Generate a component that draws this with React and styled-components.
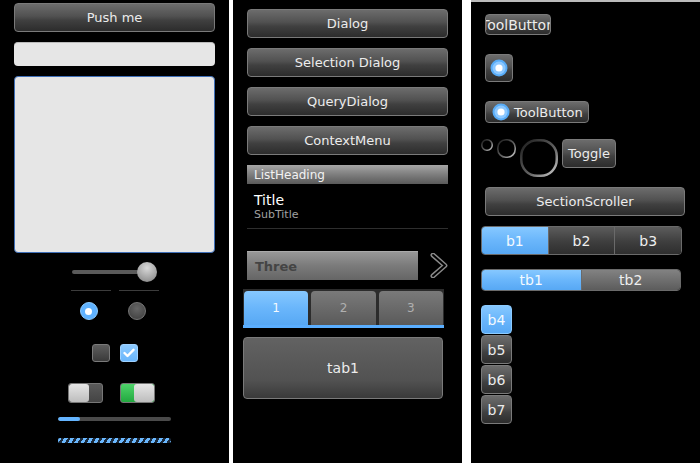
import React from "react";
import styled, { createGlobalStyle, css } from "styled-components";

const Global = createGlobalStyle`
  html, body {
    margin: 0;
    padding: 0;
    background: #fff;
  }
  body {
    font-family: "DejaVu Sans", "Liberation Sans", sans-serif;
  }
`;

const Page = styled.div`
  display: flex;
  width: 700px;
  height: 463px;
  background: #fff;
  overflow: hidden;
`;

const Panel = styled.div`
  width: 229px;
  height: 463px;
  margin-left: ${(p) => p.$gap || 0}px;
  background: #000;
  display: flex;
  flex-direction: column;
  align-items: ${(p) => (p.$start ? "flex-start" : "stretch")};
  padding: 0 14px;
  box-sizing: border-box;
  overflow: hidden;
  ${(p) => p.$top && css`border-top: 2px solid #bbb;`}
`;

const darkGrad = css`
  background: linear-gradient(#6c6c6c 0%, #515151 45%, #404040 60%, #2c2c2c 100%);
  border: 1px solid #7a7a7a;
  color: #ececec;
`;

const blueGrad = css`
  background: linear-gradient(#86c8ff 0%, #6ab6fb 50%, #57a8f4 100%);
  color: #f4faff;
`;

const Button = styled.div`
  ${darkGrad};
  box-sizing: border-box;
  height: ${(p) => p.$h || 29}px;
  width: ${(p) => (p.$w ? `${p.$w}px` : "auto")};
  margin-top: ${(p) => p.$mt || 0}px;
  border-radius: 4px;
  display: flex;
  align-items: center;
  justify-content: center;
  font-size: 13px;
  white-space: nowrap;
  overflow: hidden;
  flex-shrink: 0;
  & > svg {
    flex-shrink: 0;
  }
`;

const TextField = styled.div`
  height: 24px;
  margin-top: 10px;
  background: #e6e6e6;
  border-radius: 4px;
  border-top: 1px solid #bbb;
  box-sizing: border-box;
`;

const TextArea = styled.div`
  height: 177px;
  margin-top: 10px;
  background: #e6e6e6;
  border: 1px solid #3f6fb8;
  border-radius: 4px;
  box-sizing: border-box;
`;

const Row = styled.div`
  display: flex;
  justify-content: ${(p) => p.$justify || "center"};
  align-items: center;
  gap: ${(p) => p.$gap || 0}px;
  margin-top: ${(p) => p.$mt || 0}px;
  padding-right: ${(p) => p.$pr || 0}px;
  flex-shrink: 0;
`;

const Slider = styled.div`
  width: 85px;
  height: 20px;
  display: flex;
  align-items: center;
`;

const SliderTrack = styled.div`
  flex: 1;
  height: 4px;
  margin-right: -10px;
  border-radius: 2px;
  background: #5a5a5a;
`;

const SliderThumb = styled.div`
  width: 20px;
  height: 20px;
  border-radius: 50%;
  background: radial-gradient(circle at 50% 30%, #d8d8d8, #9a9a9a 70%, #7a7a7a);
  position: relative;
`;

const Rule = styled.div`
  width: 40px;
  height: 1px;
  background: #3c3c3c;
`;

const Radio = styled.div`
  width: 18px;
  height: 18px;
  border-radius: 50%;
  box-sizing: border-box;
  display: flex;
  align-items: center;
  justify-content: center;
  ${(p) =>
    p.$on
      ? css`
          background: #5fb2ff;
          border: 1px solid #8ccbff;
        `
      : css`
          background: radial-gradient(circle at 50% 35%, #666, #3c3c3c);
          border: 1px solid #777;
        `}
`;

const RadioDot = styled.div`
  width: 7px;
  height: 7px;
  border-radius: 50%;
  background: #fff;
`;

const Check = styled.div`
  width: 18px;
  height: 18px;
  border-radius: 3px;
  box-sizing: border-box;
  display: flex;
  align-items: center;
  justify-content: center;
  ${(p) =>
    p.$on
      ? css`
          background: linear-gradient(#8ccaff, #6ab6fb);
          border: 1px solid #9fd2ff;
        `
      : css`
          background: linear-gradient(#5e5e5e, #3a3a3a);
          border: 1px solid #7a7a7a;
        `}
`;

const Switch = styled.div`
  width: 35px;
  height: 20px;
  border-radius: 3px;
  display: flex;
  flex-direction: ${(p) => (p.$on ? "row-reverse" : "row")};
  overflow: hidden;
  background: ${(p) =>
    p.$on ? "linear-gradient(#4fd46a, #22a83f)" : "linear-gradient(#5a5a5a, #444)"};
  border: 1px solid #777;
  box-sizing: border-box;
`;

const SwitchKnob = styled.div`
  width: 20px;
  height: 100%;
  border-radius: 3px;
  background: linear-gradient(#e6e6e6, #bdbdbd);
`;

const Progress = styled.div`
  width: 113px;
  height: 4px;
  margin-top: ${(p) => p.$mt}px;
  border-radius: 2px;
  background: #4a4a4a;
  overflow: hidden;
  ${(p) =>
    p.$busy &&
    css`
      height: 5px;
      background: repeating-linear-gradient(
        120deg,
        #6ab8ff 0 3px,
        #1c2a3a 3px 5.5px
      );
    `}
`;

const ProgressFill = styled.div`
  height: 100%;
  background: #64b4ff;
  border-radius: 2px;
`;

const ListHeading = styled.div`
  margin-top: 10px;
  height: 19px;
  background: linear-gradient(#a5a5a5, #7a7a7a 55%, #5a5a5a);
  color: #f2f2f2;
  font-size: 12px;
  display: flex;
  align-items: center;
  padding-left: 7px;
  flex-shrink: 0;
`;

const ListItem = styled.div`
  padding: 8px 7px 6px;
  border-bottom: 1px solid #2e2e2e;
  flex-shrink: 0;
`;

const ItemTitle = styled.div`
  color: #fff;
  font-size: 14px;
  line-height: 16px;
`;

const ItemSub = styled.div`
  color: #a0a0a0;
  font-size: 11px;
  line-height: 14px;
`;

const Selector = styled.div`
  width: 172px;
  height: 29px;
  box-sizing: border-box;
  background: linear-gradient(#979797, #7a7a7a 50%, #656565);
  border-top: 1px solid #aaa;
  color: #444;
  font-weight: bold;
  font-size: 13px;
  display: flex;
  align-items: center;
  padding-left: 8px;
`;

const TabBar = styled.div`
  margin: 9px 0 0 -4px;
  width: 201px;
  height: 39px;
  box-sizing: border-box;
  background: #2c2c2c;
  border-bottom: 3px solid #5aaeff;
  padding: 2px 1px 0;
  display: flex;
  gap: 3px;
  flex-shrink: 0;
`;

const Tab = styled.div`
  flex: 1;
  border-radius: 4px 4px 0 0;
  display: flex;
  align-items: center;
  justify-content: center;
  font-size: 12px;
  ${(p) =>
    p.$on
      ? css`
          ${blueGrad};
        `
      : css`
          background: linear-gradient(#7a7a7a, #5a5a5a);
          color: #b0b0b0;
        `}
`;

const TabPage = styled(Button)`
  margin-left: -4px;
  font-size: 14px;
  background: linear-gradient(#626262 0%, #525252 70%, #3a3a3a 100%);
`;

const ToolButton = styled(Button)`
  gap: 4px;
  font-size: ${(p) => p.$fs || 14}px;
  padding: 0 ${(p) => p.$px || 0}px;
  justify-content: ${(p) => p.$justify || "center"};
`;

const BusyRow = styled.div`
  display: flex;
  align-items: flex-start;
  gap: 4px;
  margin: 16px 0 0 -4px;
`;

const Segmented = styled.div`
  display: flex;
  width: ${(p) => p.$w}px;
  height: ${(p) => p.$h}px;
  margin: ${(p) => p.$mt}px 0 0 ${(p) => p.$ml || 0}px;
  border-radius: 4px;
  overflow: hidden;
  border: 1px solid #6a6a6a;
  box-sizing: border-box;
  flex-shrink: 0;
`;

const Segment = styled.div`
  flex: 1;
  display: flex;
  align-items: center;
  justify-content: center;
  font-size: 14px;
  & + & {
    border-left: 1px solid #6a6a6a;
  }
  ${(p) =>
    p.$on
      ? blueGrad
      : p.$light
      ? css`
          background: linear-gradient(#828282, #5c5c5c);
          color: #eee;
        `
      : css`
          background: linear-gradient(#5c5c5c, #3e3e3e 55%, #2e2e2e);
          color: #eee;
        `}
`;

const ColumnGroup = styled.div`
  display: flex;
  flex-direction: column;
  gap: 1px;
  margin: 14px 0 0 -4px;
`;

const ColButton = styled(Button)`
  width: 31px;
  font-size: 14px;
  ${(p) =>
    p.$on &&
    css`
      ${blueGrad};
      border: 1px solid #8ccbff;
    `}
`;

const BlueIcon = () => (
  <svg width="18" height="18" viewBox="0 0 18 18">
    <circle cx="9" cy="9" r="8.5" fill="#58acf7" />
    <circle cx="9" cy="9" r="6.5" fill="#8cc8ff" />
    <circle cx="9" cy="9" r="3.6" fill="#fff" />
  </svg>
);

const Spinner = ({ size }) => {
  const id = `sp${size}`;
  const w = size > 30 ? 2.5 : 1.6;
  return (
    <svg width={size} height={size} viewBox={`0 0 ${size} ${size}`}>
      <defs>
        <linearGradient id={id} x1="0" y1="0" x2="1" y2="1">
          <stop offset="0" stopColor="#1a1a1a" />
          <stop offset="0.6" stopColor="#666" />
          <stop offset="1" stopColor="#d0d0d0" />
        </linearGradient>
      </defs>
      <rect
        x={w / 2}
        y={w / 2}
        width={size - w}
        height={size - w}
        rx={size * 0.42}
        fill="none"
        stroke={`url(#${id})`}
        strokeWidth={w}
      />
    </svg>
  );
};

const Chevron = () => (
  <svg width="18" height="25" viewBox="0 0 18 25">
    <polyline points="3,2 15,12.5 3,23" fill="none" stroke="#8a8a8a" strokeWidth="5" strokeLinejoin="round" strokeLinecap="round" />
    <polyline points="3,2 15,12.5 3,23" fill="none" stroke="#000" strokeWidth="2" strokeLinejoin="round" strokeLinecap="round" />
  </svg>
);

const CheckMark = () => (
  <svg width="12" height="10" viewBox="0 0 12 10">
    <polyline points="1.5,5 4.5,8 10.5,1.8" fill="none" stroke="#fff" strokeWidth="2.4" strokeLinecap="round" strokeLinejoin="round" />
  </svg>
);

export default function App() {
  return (
    <Page>
      <Global />
      <Panel>
        <Button $mt={3}>Push me</Button>
        <TextField />
        <TextArea />
        <Row $mt={9}>
          <Slider>
            <SliderTrack />
            <SliderThumb />
          </Slider>
        </Row>
        <Row $mt={8} $gap={8}>
          <Rule />
          <Rule />
        </Row>
        <Row $mt={11} $gap={30} $pr={4}>
          <Radio $on>
            <RadioDot />
          </Radio>
          <Radio />
        </Row>
        <Row $mt={24} $gap={10}>
          <Check />
          <Check $on>
            <CheckMark />
          </Check>
        </Row>
        <Row $mt={21} $gap={17} $pr={7}>
          <Switch>
            <SwitchKnob />
          </Switch>
          <Switch $on>
            <SwitchKnob />
          </Switch>
        </Row>
        <Row>
          <Progress $mt={14}>
            <ProgressFill style={{ width: `${(22 / 113) * 100}%` }} />
          </Progress>
        </Row>
        <Row>
          <Progress $mt={17} $busy />
        </Row>
      </Panel>

      <Panel $gap={4}>
        <Button $mt={9}>Dialog</Button>
        <Button $mt={10}>Selection Dialog</Button>
        <Button $mt={10}>QueryDialog</Button>
        <Button $mt={10}>ContextMenu</Button>
        <ListHeading>ListHeading</ListHeading>
        <ListItem>
          <ItemTitle>Title</ItemTitle>
          <ItemSub>SubTitle</ItemSub>
        </ListItem>
        <Row $mt={22} $gap={12} $justify="flex-start">
          <Selector>Three</Selector>
          <Chevron />
        </Row>
        <TabBar>
          <Tab $on>1</Tab>
          <Tab>2</Tab>
          <Tab>3</Tab>
        </TabBar>
        <TabPage $mt={9} $h={62} $w={200}>tab1</TabPage>
      </Panel>

      <Panel $gap={9} $start $top>
        <ToolButton $mt={12} $h={21} $w={66}>
          ToolButton
        </ToolButton>
        <ToolButton $mt={19} $h={28} $w={28}>
          <BlueIcon />
        </ToolButton>
        <ToolButton $mt={19} $h={22} $w={104} $px={6} $fs={13} $justify="flex-start">
          <BlueIcon />
          ToolButton
        </ToolButton>
        <BusyRow>
          <Spinner size={12} />
          <Spinner size={19} />
          <Spinner size={38} />
          <Button $w={54}>Toggle</Button>
        </BusyRow>
        <Button $mt={10} $w={200}>SectionScroller</Button>
        <Segmented $w={201} $h={29} $mt={10} $ml={-4}>
          <Segment $on>b1</Segment>
          <Segment>b2</Segment>
          <Segment>b3</Segment>
        </Segmented>
        <Segmented $w={200} $h={22} $mt={14} $ml={-4}>
          <Segment $on>tb1</Segment>
          <Segment $light>tb2</Segment>
        </Segmented>
        <ColumnGroup>
          <ColButton $on>b4</ColButton>
          <ColButton>b5</ColButton>
          <ColButton>b6</ColButton>
          <ColButton>b7</ColButton>
        </ColumnGroup>
      </Panel>
    </Page>
  );
}
